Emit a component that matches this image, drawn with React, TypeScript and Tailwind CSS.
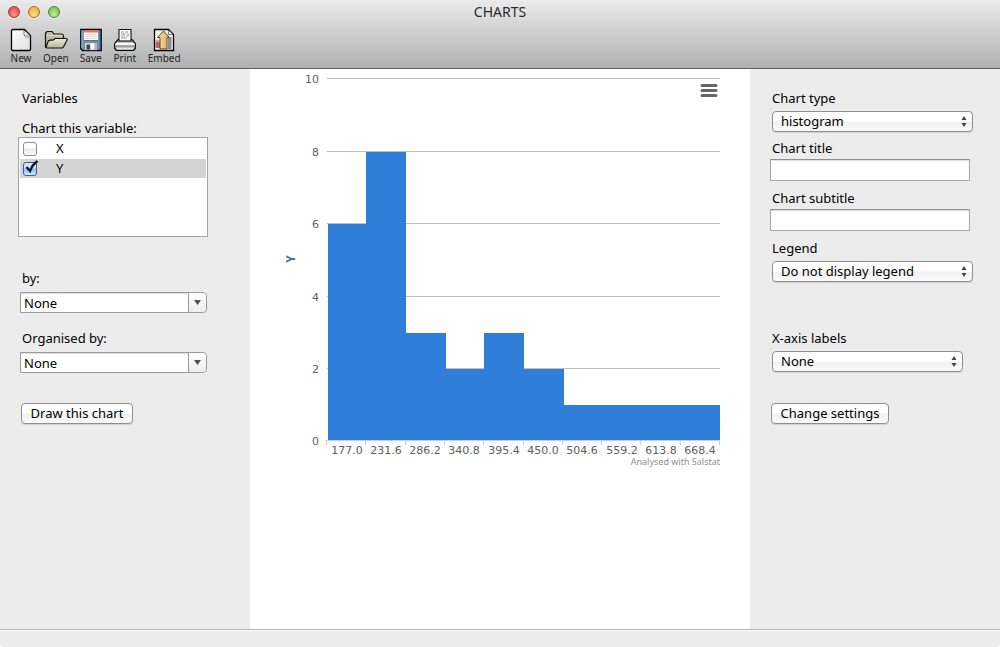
import React, { useState } from "react";

const labelText = "text-[13px] leading-5";
const shell =
  "h-[21px] rounded border border-[#8f8f8f] bg-linear-to-b from-white from-45% via-[#f1f1f1] via-55% to-[#fafafa] shadow-[0_1px_0_#d2d2d2]";

function NewIcon() {
  return (
    <svg width="22" height="24" viewBox="0 0 22 24" aria-hidden="true">
      <defs>
        <linearGradient id="paper" x1="0" y1="0" x2="1" y2="1">
          <stop offset="0" stopColor="#fff" />
          <stop offset="1" stopColor="#dedede" />
        </linearGradient>
      </defs>
      <path d="M1.500 2.500L2.500 1.500H14.500L20.500 7.500V21.500L19.500 22.500H2.500L1.500 21.500Z" fill="url(#paper)" stroke="#000" strokeWidth="1.300" />
      <path d="M14 2V7L15 8H20.500Z" fill="#efefef" stroke="#444" strokeWidth=".7" />
      <path d="M13 9H19V11Z" fill="#c9c9c9" />
    </svg>
  );
}

function OpenIcon() {
  return (
    <svg width="24" height="24" viewBox="0 0 24 24" aria-hidden="true">
      <defs>
        <linearGradient id="folder" x1="0" y1="0" x2="0" y2="1">
          <stop offset="0" stopColor="#eceddd" />
          <stop offset="1" stopColor="#b2b598" />
        </linearGradient>
      </defs>
      <path d="M1.500 19V5L3 3.500H8L10 6H18L19.500 7.500V12H6L2.500 19.500Z" fill="#b9bca2" stroke="#111" strokeWidth="1.200" />
      <path d="M2.500 7.500H18.500" stroke="#d8dac8" strokeWidth="1.200" />
      <path d="M4.500 12.500L9.500 12L11 10.500H22.500L23.300 11.500L19.500 19L18.500 20H3L2 19Z" fill="url(#folder)" stroke="#111" strokeWidth="1.200" />
    </svg>
  );
}

function SaveIcon() {
  return (
    <svg width="22" height="24" viewBox="0 0 22 24" aria-hidden="true">
      <path d="M.8 1.500H21.200V22.500H2.500L.8 20.800Z" fill="#6e99ba" stroke="#000" strokeWidth="1.300" />
      <path d="M2 2.200V20" stroke="#9dbfd8" />
      <path d="M19.500 2.200V21.800" stroke="#527b9b" />
      <rect x="4" y="2" width="14" height="10" fill="#fff" />
      <rect x="4" y="2" width="14" height="2.500" fill="#dc7668" />
      <path d="M5 6.500H17M5 8.500H17M5 10.500H17" stroke="#e5c6c2" strokeWidth=".8" />
      <path d="M4 12.500H18" stroke="#4f718a" />
      <rect x="4.500" y="14.500" width="13" height="7.500" fill="#dedede" stroke="#587488" strokeWidth=".7" />
      <rect x="6.500" y="16.500" width="3.500" height="5" fill="#3e464c" />
      <rect x="11" y="15.500" width="3" height="6" fill="#f9f9f9" />
      <rect x="14.500" y="15" width="2.500" height="7" fill="#b6babd" />
    </svg>
  );
}

function PrintIcon() {
  return (
    <svg width="24" height="24" viewBox="0 0 24 24" aria-hidden="true">
      <path d="M5 11.500H19L22.300 15.500V20.500L20.500 22.500H3.500L1.700 20.500V15.500Z" fill="#c4c4c4" stroke="#000" strokeWidth="1.200" />
      <path d="M6 1.500H18V13H6Z" fill="#fff" stroke="#111" strokeWidth="1.100" />
      <path d="M8 4H11M12 4H15M8 6H13M14 6H16M8 8H12M13 8H16M8 10H14" stroke="#888" strokeWidth=".9" />
      <path d="M4.500 13.200H19.500" stroke="#555" strokeWidth="1" />
      <path d="M2.500 15H21.500V17.500H2.500Z" fill="#f8f8f8" />
      <path d="M2.500 18H21.500" stroke="#777" />
      <path d="M4 20.500H20" stroke="#e3e3e3" />
    </svg>
  );
}

function EmbedIcon() {
  return (
    <svg width="22" height="24" viewBox="0 0 22 24" aria-hidden="true">
      <defs>
        <linearGradient id="arrow">
          <stop offset="0" stopColor="#f8dda0" />
          <stop offset="1" stopColor="#d8ac60" />
        </linearGradient>
      </defs>
      <path d="M1.500 1.500H15.500L20.500 6.500V22.500H1.500Z" fill="#f1f1f1" stroke="#000" strokeWidth="1.300" />
      <path d="M2.500 12H7V20H2.500Z" fill="#bc6078" />
      <path d="M2.500 12H7V14H2.500Z" fill="#e1a2b0" />
      <path d="M15 9H18.500V21H15Z" fill="#8e8e88" />
      <path d="M15.500 2V6.500H20Z" fill="#fff" stroke="#444" strokeWidth=".7" />
      <path d="M10.500 3L16.500 9.500H14V21H7V9.500H4.500Z" fill="url(#arrow)" stroke="#5e4a24" strokeWidth="1" />
    </svg>
  );
}

const tools = [
  { name: "New", Icon: NewIcon },
  { name: "Open", Icon: OpenIcon },
  { name: "Save", Icon: SaveIcon },
  { name: "Print", Icon: PrintIcon },
  { name: "Embed", Icon: EmbedIcon },
];

function Header() {
  const light = "size-3 rounded-full border shadow-[0_1px_0_#ffffff99]";
  return (
    <header className="h-[69px] border-b border-[#626262] bg-linear-to-b from-[#ebebeb] to-[#b0b0b0]">
      <div className="grid h-[23px] grid-cols-[1fr_auto_1fr] items-center">
        <div className="flex gap-2 pl-2">
          <button aria-label="Close" className={`${light} border-[#9c3b3a] bg-radial-[at_50%_80%] from-[#ff9b95] to-[#d8383b]`} />
          <button aria-label="Minimise" className={`${light} border-[#a87328] bg-radial-[at_50%_80%] from-[#ffe68d] to-[#e59b2d]`} />
          <button aria-label="Zoom" className={`${light} border-[#4f843c] bg-radial-[at_50%_80%] from-[#c5f29c] to-[#64b046]`} />
        </div>
        <h1 className="text-sm text-[#2b2b2b]">CHARTS</h1>
      </div>
      <nav className="flex gap-[11px] pt-[5px] pl-[10px]">
        {tools.map(({ name, Icon }) => (
          <button key={name} className="flex flex-col items-center text-[10px] leading-3 text-[#222]">
            <Icon />
            {name}
          </button>
        ))}
      </nav>
    </header>
  );
}

function Combo({ id, label }: { id: string; label: string }) {
  return (
    <div className="flex flex-col gap-1">
      <label htmlFor={id} className={`${labelText} pl-1`}>{label}</label>
      <div className="relative ml-0.5 w-[187px]">
        <select id={id} className="block h-[21px] w-full appearance-none rounded-r border border-[#9a9a9a] bg-white pl-[3px] text-[13px] leading-5 shadow-[inset_0_1px_1px_#ddd]">
          <option>None</option>
        </select>
        <span className="pointer-events-none absolute inset-y-px right-px flex w-[18px] items-center justify-center rounded-r border-l border-[#9a9a9a] bg-linear-to-b from-white to-[#ededed]">
          <svg width="7" height="5" viewBox="0 0 7 5"><path d="M0 0H7L3.500 5Z" fill="#505050" /></svg>
        </span>
      </div>
    </div>
  );
}

function PopUp({ id, label, options, width }: { id: string; label: string; options: string[]; width: string }) {
  return (
    <div className="flex flex-col gap-[3px]">
      <label htmlFor={id} className={`${labelText} pl-0.5`}>{label}</label>
      <div className={`relative ml-0.5 ${width}`}>
        <select id={id} className={`${shell} block w-full appearance-none pl-2 text-[13px] leading-[19px]`}>
          {options.map((o) => <option key={o}>{o}</option>)}
        </select>
        <svg className="pointer-events-none absolute top-[5px] right-[6px]" width="6" height="11" viewBox="0 0 6 11">
          <path d="M3 0L5.500 4H.5ZM3 11L5.500 7H.5Z" fill="#444" />
        </svg>
      </div>
    </div>
  );
}

function TextField({ id, label }: { id: string; label: string }) {
  return (
    <div className="flex flex-col gap-px">
      <label htmlFor={id} className={`${labelText} pl-0.5`}>{label}</label>
      <input id={id} type="text" className="h-[22px] w-[200px] border border-[#a8a8a8] border-t-[#8e8e8e] bg-white px-1 text-[13px] shadow-[inset_0_1px_1px_#ddd]" />
    </div>
  );
}

function VariableRow({ name, initial }: { name: string; initial: boolean }) {
  const [on, setOn] = useState(initial);
  return (
    <label className={`flex h-[19px] items-center gap-[19px] pl-[3px] text-[13px] ${on ? "bg-[#d4d4d4]" : ""}`}>
      <span className="relative size-[14px]">
        <input
          type="checkbox"
          checked={on}
          onChange={() => setOn(!on)}
          className="block size-[14px] appearance-none rounded-[3px] border border-[#8f8f8f] bg-linear-to-b from-white from-40% via-[#e9e9e9] to-[#fafafa] checked:border-[#4c559c] checked:from-[#d3e6fa] checked:via-[#86bdf3] checked:to-[#c4f0ff]"
        />
        {on && (
          <svg className="pointer-events-none absolute -top-0.5 left-0" width="16" height="15" viewBox="0 0 16 15">
            <path d="M3.500 7L7 11C8.500 7 11 3.500 14.500 1" fill="none" stroke="#0b1733" strokeWidth="2.400" />
          </svg>
        )}
      </span>
      {name}
    </label>
  );
}

const bins = [
  { label: "177.0", count: 6, x0: 78, x1: 116 },
  { label: "231.6", count: 8, x0: 116, x1: 156 },
  { label: "286.2", count: 3, x0: 156, x1: 196 },
  { label: "340.8", count: 2, x0: 196, x1: 234 },
  { label: "395.4", count: 3, x0: 234, x1: 274 },
  { label: "450.0", count: 2, x0: 274, x1: 314 },
  { label: "504.6", count: 1, x0: 314, x1: 352 },
  { label: "559.2", count: 1, x0: 352, x1: 392 },
  { label: "613.8", count: 1, x0: 392, x1: 431 },
  { label: "668.4", count: 1, x0: 431, x1: 470 },
];
const gridLines = [
  { value: 2, y: 299 },
  { value: 4, y: 227 },
  { value: 6, y: 154 },
  { value: 8, y: 82 },
  { value: 10, y: 9 },
];
const axisY = 371;
const yOf = (v: number) => Math.round(axisY - v * 36.15);

function Histogram() {
  return (
    <svg viewBox="0 0 500 410" className="block w-full font-['DejaVu_Sans',sans-serif]" role="img" aria-label="Histogram of Y">
      <g shapeRendering="crispEdges">
        {gridLines.map((g) => (
          <rect key={g.value} x="77" y={g.y} width="393" height="1" fill="#c0c0c0" />
        ))}
        {bins.map((b) => {
          const top = yOf(b.count) + 1;
          return <rect key={b.label} x={b.x0} y={top} width={b.x1 - b.x0} height={axisY - top} fill="#2f7ed8" />;
        })}
        <rect x="76" y={axisY} width="394" height="1" fill="#c0d0e0" />
        {Array.from({ length: 11 }, (_, i) => (
          <rect key={i} x={Math.round(76 + i * 39.3)} y={axisY} width="1" height="5" fill="#c0d0e0" />
        ))}
      </g>
      <g fontSize="11" fill="#606060">
        {[{ value: 0, y: axisY }, ...gridLines].map((g) => (
          <text key={g.value} x="69" y={g.y + 5} textAnchor="end">{g.value}</text>
        ))}
        {bins.map((b, i) => (
          <text key={b.label} x={Math.round(96.500 + i * 39.3)} y="385" textAnchor="middle">{b.label}</text>
        ))}
      </g>
      <text transform="translate(45 190) rotate(270)" textAnchor="middle" fontSize="12" fontWeight="700" fill="#4d759e" className="font-['Noto_Sans',sans-serif]">Y</text>
      <text x="470" y="396" textAnchor="end" fontSize="9" fill="#909090" className="font-['Noto_Sans',sans-serif]">Analysed with Salstat</text>
      <path d="M452 16.500H466M452 21.500H466M452 26.500H466" stroke="#666" strokeWidth="3" strokeLinecap="round" />
    </svg>
  );
}

export default function App() {
  return (
    <div className="flex min-h-screen flex-col overflow-hidden rounded-b bg-[#ececec] font-['Noto_Sans',sans-serif] text-black">
      <Header />
      <main className="flex flex-1">
        <aside className="flex w-1/4 flex-col items-start pt-[19px] pl-[18px]">
          <h2 className={`${labelText} pl-1`}>Variables</h2>
          <fieldset className="mt-[10px]">
            <legend className={`${labelText} h-[19px] pl-1`}>Chart this variable:</legend>
            <div className="flex h-[100px] w-[190px] flex-col gap-px border border-[#a3a3a3] bg-white px-px pt-px">
              <VariableRow name="X" initial={false} />
              <VariableRow name="Y" initial={true} />
            </div>
          </fieldset>
          <div className="mt-[31px] flex flex-col gap-[15px]">
            <Combo id="by" label="by:" />
            <Combo id="organised" label="Organised by:" />
          </div>
          <button className={`${shell} mt-[30px] ml-[3px] w-[112px] text-[13px] leading-[19px]`}>Draw this chart</button>
        </aside>
        <section className="flex-1 bg-white">
          <Histogram />
        </section>
        <aside className="flex w-1/4 flex-col items-start pt-[19px] pl-5">
          <div className="flex flex-col gap-[7px]">
            <PopUp id="type" label="Chart type" options={["histogram"]} width="w-[201px]" />
            <div className="-mt-px"><TextField id="title" label="Chart title" /></div>
            <TextField id="subtitle" label="Chart subtitle" />
            <PopUp id="legend" label="Legend" options={["Do not display legend"]} width="w-[201px]" />
          </div>
          <div className="mt-[46px]">
            <PopUp id="xlabels" label="X-axis labels" options={["None"]} width="w-[191px]" />
          </div>
          <button className={`${shell} mt-[31px] ml-px w-[118px] text-[13px] leading-[19px]`}>Change settings</button>
        </aside>
      </main>
      <footer className="h-[18px] border-t border-[#b4b4b4] shadow-[inset_0_1px_0_#fff]" />
    </div>
  );
}
